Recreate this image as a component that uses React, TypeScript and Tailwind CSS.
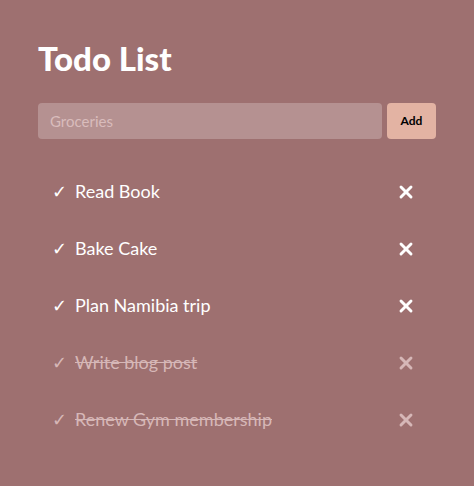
import { X } from "lucide-react"

const todos = [
    { text: "Read Book", done: false },
    { text: "Bake Cake", done: false },
    { text: "Plan Namibia trip", done: false },
    { text: "Write blog post", done: true },
    { text: "Renew Gym membership", done: true },
]

export default function App() {
    return (
        <div className="min-h-[486px] bg-[#9e7070] px-[38px] pt-[36px] font-['Lato',sans-serif]">
            <h1 className="text-[33px] leading-[44px] font-black text-white">Todo List</h1>

            {/* Input row */}
            <div className="mt-[23px] flex gap-[5px]">
                <input
                    className="h-[36px] flex-1 rounded-[4px] bg-[#b59191] px-[12px] text-[15px] text-white placeholder:text-[#d9bcbc] outline-none"
                    placeholder="Groceries"
                />
                <button className="h-[36px] w-[49px] rounded-[4px] bg-[#e3b3a3] text-[12px] font-bold text-black">
                    Add
                </button>
            </div>

            {/* Items */}
            <ul className="mt-[24px]">
                {todos.map((todo) => (
                    <li
                        key={todo.text}
                        className={`flex h-[57px] items-center pl-[14px] pr-[20px] ${todo.done ? "text-[#d6b7b7]" : "text-white"}`}
                    >
                        <span className="w-[23px] text-[18px] font-bold font-['DejaVu_Sans',sans-serif]">✓</span>
                        <span className={`flex-1 text-[18px] ${todo.done ? "line-through" : ""}`}>{todo.text}</span>
                        <X size={20} strokeWidth={3.5} />
                    </li>
                ))}
            </ul>
        </div>
    )
}
